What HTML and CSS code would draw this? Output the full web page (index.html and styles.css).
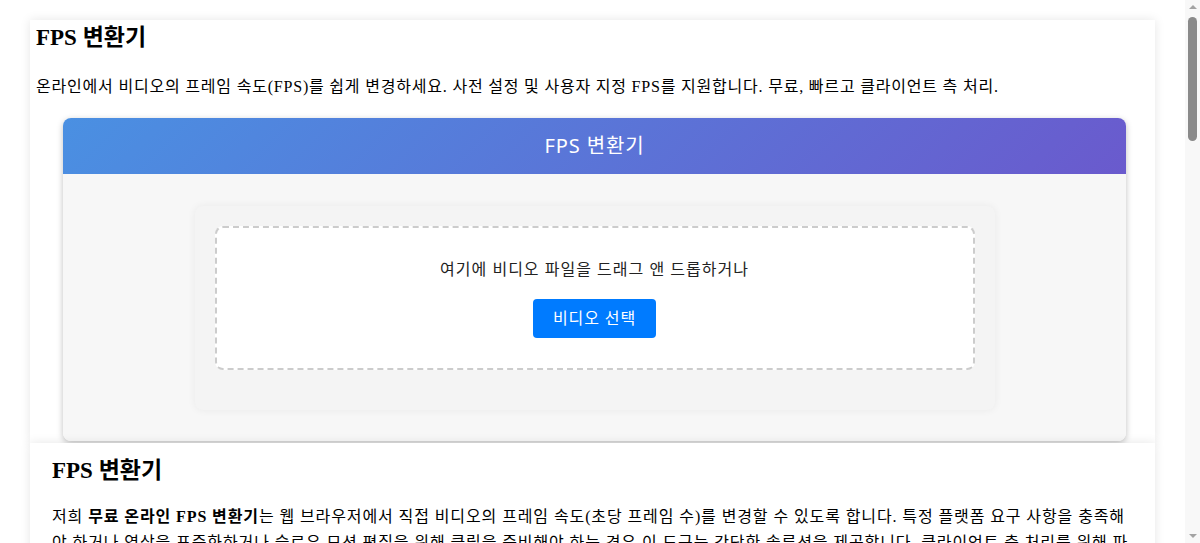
FILE: index.html
```html
<!DOCTYPE html>
<html lang="ko">
<head>
    <meta charset="utf-8">
    <title>FPS 변환기</title>
    <link rel="stylesheet" href="styles.css">
</head>
<body>
    <div class="container intro">
        <h2>FPS 변환기</h2>
        <p>온라인에서 비디오의 프레임 속도(FPS)를 쉽게 변경하세요. 사전 설정 및 사용자 지정 FPS를 지원합니다. 무료, 빠르고 클라이언트 측 처리.</p>
        <div class="tool">
            <div class="tool-header">FPS 변환기</div>
            <div class="tool-body">
                <div class="upload-box">
                    <div class="dropzone">
                        <p>여기에 비디오 파일을 드래그 앤 드롭하거나</p>
                        <button type="button" class="btn">비디오 선택</button>
                    </div>
                </div>
            </div>
        </div>
    </div>

    <div class="container article">
        <h2>FPS 변환기</h2>
        <p>저희 <strong>무료 온라인 FPS 변환기</strong>는 웹 브라우저에서 직접 비디오의 프레임 속도(초당 프레임 수)를 변경할 수 있도록 합니다. 특정 플랫폼 요구 사항을 충족해야 하거나 영상을 표준화하거나 슬로우 모션 편집을 위해 클립을 준비해야 하는 경우 이 도구는 간단한 솔루션을 제공합니다. 클라이언트 측 처리를 위해 파일은 서버로 업로드되지 않으며 모든 변환은 사용자의 기기에서 이루어집니다.</p>
        <h3>주요 기능</h3>
        <ul>
            <li><strong>사전 설정 FPS:</strong> 24, 25, 30, 50, 60 FPS 중에서 빠르게 선택하세요.</li>
            <li><strong>사용자 지정 FPS:</strong> 원하는 프레임 속도를 직접 입력할 수 있습니다.</li>
            <li><strong>개인 정보 보호:</strong> 모든 처리는 브라우저에서 이루어집니다.</li>
            <li><strong>완전 무료:</strong> 가입이나 워터마크가 없습니다.</li>
        </ul>
        <h3>사용 방법</h3>
        <ol>
            <li>비디오 파일을 드래그 앤 드롭하거나 "비디오 선택" 버튼을 클릭하세요.</li>
            <li>사전 설정 FPS를 선택하거나 사용자 지정 값을 입력하세요.</li>
            <li>"변환" 버튼을 클릭하고 처리가 끝날 때까지 기다리세요.</li>
            <li>변환된 비디오를 다운로드하세요.</li>
        </ol>
        <h3>자주 묻는 질문</h3>
        <p><strong>FPS란 무엇인가요?</strong><br>FPS(초당 프레임 수)는 비디오에서 1초 동안 표시되는 이미지의 수입니다. 값이 높을수록 움직임이 더 부드럽게 보입니다.</p>
        <p><strong>FPS를 변경하면 비디오 길이가 달라지나요?</strong><br>아니요. 프레임이 복제되거나 제거될 뿐 재생 시간은 그대로 유지됩니다.</p>
        <p><strong>어떤 형식을 지원하나요?</strong><br>MP4, WebM, MOV 등 브라우저에서 재생할 수 있는 대부분의 형식을 지원합니다.</p>
        <p><strong>파일 크기 제한이 있나요?</strong><br>처리는 기기에서 이루어지므로 제한은 사용 중인 기기의 메모리에 따라 달라집니다.</p>
        <h3>관련 도구</h3>
        <ul>
            <li>비디오 압축기</li>
            <li>비디오 자르기</li>
            <li>비디오 속도 변경기</li>
            <li>비디오를 GIF로 변환</li>
        </ul>
        <p>이 도구가 유용했다면 친구들과 공유해 주세요.</p>
    </div>

    <div class="scrollbar">
        <span class="arrow up"></span>
        <span class="thumb"></span>
        <span class="arrow down"></span>
    </div>
</body>
</html>
```

FILE: styles.css
```css
body {
    margin: 0;
    background-color: #fff;
    font-family: "Liberation Serif", "Noto Sans CJK KR", serif;
    color: #000;
}

.container {
    width: 1125px;
    margin: 0 0 0 30px;
    background-color: #fff;
    box-shadow: 0 0 10px rgba(0,0,0,0.1);
    box-sizing: border-box;
}

.container h2 {
    font-size: 23px;
    line-height: 28px;
    margin: 0;
}

.container p {
    font-size: 16px;
    line-height: 22px;
    letter-spacing: 0.9px;
}

.intro {
    margin-top: 20px;
    padding: 4px 6px 2px 6px;
}

.intro > p {
    margin: 24px 0 20px 0;
    letter-spacing: 0.8px;
}

.article {
    padding: 14px 20px 40px 22px;
}

.article p {
    line-height: 25.6px;
    margin: 19px 0 16px 0;
}

.article h3 {
    font-size: 19px;
    margin: 24px 0 12px 0;
}

.article li {
    line-height: 25.6px;
    letter-spacing: 0.9px;
}

/* tool card */
.tool {
    width: 1063px;
    margin: 0 0 0 27px;
    border-radius: 8px;
    overflow: hidden;
    box-shadow: 0 2px 6px rgba(0,0,0,0.25);
    font-family: "Noto Sans", "Noto Sans CJK KR", sans-serif;
}

.tool-header {
    height: 56px;
    line-height: 56px;
    text-align: center;
    color: #fff;
    font-size: 20px;
    letter-spacing: 0.9px;
    background: linear-gradient(135deg, #4a90e2, #6a5acd);
}

.tool-body {
    background-color: #f7f7f7;
    padding: 32px 0 31px 0;
}

.upload-box {
    width: 800px;
    margin: 0 auto;
    background-color: #f4f4f4;
    border-radius: 8px;
    padding: 20px 20px 40px 20px;
    box-sizing: border-box;
    box-shadow: 0 0 8px rgba(0,0,0,0.06);
}

.dropzone {
    background-color: #fff;
    border: 2px dashed #ccc;
    border-radius: 8px;
    padding: 30px;
    text-align: center;
}

.dropzone p {
    margin: 0 0 19px 0;
    font-size: 16px;
    line-height: 22px;
    letter-spacing: 1px;
    color: #222;
}

.btn {
    font-family: "Noto Sans", "Noto Sans CJK KR", sans-serif;
    font-size: 16px;
    line-height: 19px;
    letter-spacing: 0.9px;
    padding: 10px 20px;
    border: none;
    border-radius: 4px;
    background-color: #007bff;
    color: #fff;
    cursor: pointer;
}

.btn:hover {
    background-color: #0056b3;
}

/* browser scrollbar look */
.scrollbar {
    position: fixed;
    top: 0;
    right: 0;
    width: 15px;
    height: 100%;
    background-color: #f8f8f8;
}

.thumb {
    position: absolute;
    top: 17px;
    left: 3px;
    width: 9px;
    height: 124px;
    border-radius: 5px;
    background-color: #8a8a8a;
}

.arrow {
    position: absolute;
    left: 4px;
    width: 0;
    height: 0;
    border-left: 4px solid transparent;
    border-right: 4px solid transparent;
}

.arrow.up {
    top: 5px;
    border-bottom: 4px solid #a3a3a3;
}

.arrow.down {
    bottom: 5px;
    border-top: 4px solid #a3a3a3;
}
```
